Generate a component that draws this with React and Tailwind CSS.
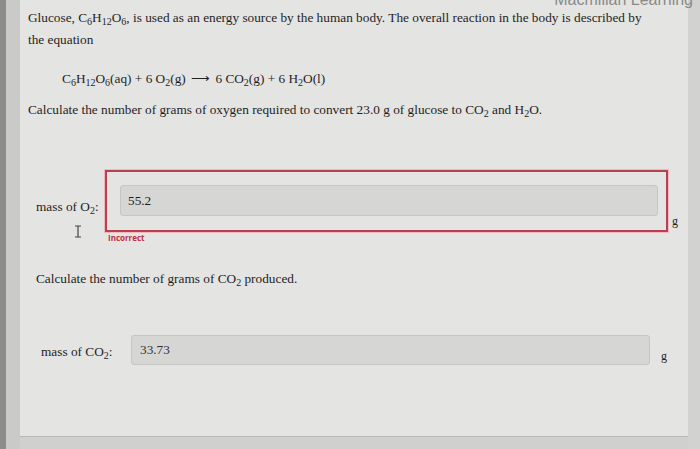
import React from "react";

const serif = { fontFamily: '"Liberation Serif", "Times New Roman", serif' };

function Sub({ children }) {
  return <sub className="text-[10px] leading-none relative top-[3px] align-baseline">{children}</sub>;
}

function IBeam() {
  return (
    <svg width="8" height="13" viewBox="0 0 8 13" className="absolute left-[54px] top-[225px]">
      <path d="M1 1 H7 M4 1 V12 M1 12 H7" stroke="#444" strokeWidth="1.2" fill="none" />
    </svg>
  );
}

export default function App() {
  return (
    <div
      className="relative w-[700px] h-[449px] overflow-hidden bg-[#d0d0ce] flex text-[#1f1f1f]"
      style={serif}
    >
      <div className="w-[6px] h-full bg-[#8c8c8a] shrink-0" />
      <div className="w-[14px] h-full bg-[#cacac8] shrink-0" />
      <div className="relative w-[668px] h-[437px] shrink-0 bg-[#e4e4e2] border-b border-[#b8b8b6] flex flex-col">
        <p className="pt-[7px] pl-[8px] w-[640px] text-[13.3px] leading-[22px]">
          Glucose, C<Sub>6</Sub>H<Sub>12</Sub>O<Sub>6</Sub>, is used as an energy source by the human body. The overall reaction in the body is described by the equation
        </p>
        <p className="mt-[17px] pl-[42px] text-[13.3px] leading-[22px]">
          C<Sub>6</Sub>H<Sub>12</Sub>O<Sub>6</Sub>(aq) + 6 O<Sub>2</Sub>(g) <span className="mx-[2px]">⟶</span> 6 CO<Sub>2</Sub>(g) + 6 H<Sub>2</Sub>O(l)
        </p>
        <p className="mt-[9px] pl-[8px] text-[13.3px] leading-[22px]">
          Calculate the number of grams of oxygen required to convert 23.0 g of glucose to CO<Sub>2</Sub> and H<Sub>2</Sub>O.
        </p>

        <div className="mt-[49px] flex items-start">
          <div className="ml-[16px] w-[69px] mt-[26px] text-[13.3px] leading-[22px] whitespace-nowrap">
            mass of O<Sub>2</Sub>:
          </div>
          <div className="w-[563px] h-[62px] border-2 border-[#b9404f] shadow-[0_0_0_1px_#f0b8c0] flex flex-col">
            <div className="ml-[13px] mr-[8px] mt-[13px] h-[31px] rounded-[3px] bg-[#d6d6d4] border border-[#c6c6c4] flex items-center pl-[7px] text-[13.3px]">
              55.2
            </div>
          </div>
          <div className="ml-[4px] mt-[44px] text-[12px] leading-[14px]">g</div>
        </div>
        <div
          className="ml-[88px] mt-[1px] text-[8px] leading-[10px] font-bold text-[#c0303f]"
          style={{ fontFamily: '"Open Sans", "Liberation Sans", sans-serif' }}
        >
          Incorrect
        </div>

        <p className="mt-[25px] pl-[16px] text-[13.3px] leading-[22px]">
          Calculate the number of grams of CO<Sub>2</Sub> produced.
        </p>

        <div className="mt-[45px] flex items-start">
          <div className="ml-[21px] w-[90px] mt-[6px] text-[13.3px] leading-[22px] whitespace-nowrap">
            mass of CO<Sub>2</Sub>:
          </div>
          <div className="w-[519px] h-[30px] rounded-[3px] bg-[#d6d6d4] border border-[#c6c6c4] flex items-center pl-[8px] text-[13.3px] text-[#333]">
            33.73
          </div>
          <div className="ml-[11px] mt-[14px] text-[12px] leading-[14px]">g</div>
        </div>

        <IBeam />
      </div>
      <div className="flex-1 h-full bg-[#d2d2d0]" />
      <div
        className="absolute top-[-12px] right-[7px] text-[16px] text-[#8a8a8a] whitespace-nowrap"
        style={{ fontFamily: '"Liberation Sans", Arial, sans-serif' }}
      >
        Macmillan Learning
      </div>
    </div>
  );
}
